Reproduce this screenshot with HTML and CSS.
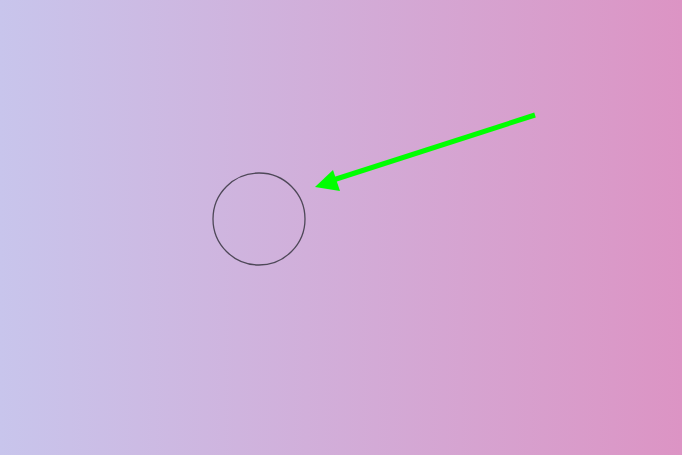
FILE: index.html
```html
<!DOCTYPE html>
<html lang="en">
<head>
    <meta charset="UTF-8">
    <meta name="viewport" content="width=device-width, initial-scale=1.0">
    <title>Canvas</title>
    <link rel="stylesheet" href="styles.css">
</head>
<body>
    <main class="canvas">
        <svg class="drawing" width="682" height="455" viewBox="0 0 682 455">
            <!-- target circle -->
            <circle cx="259" cy="219" r="46" fill="none" stroke="#4e4858" stroke-width="1.3"/>
            <!-- pointer arrow -->
            <line x1="535" y1="115" x2="330" y2="181" stroke="#00ff00" stroke-width="5"/>
            <polygon points="315,187 333,170 340,191" fill="#00ff00"/>
        </svg>
    </main>
</body>
</html>
```

FILE: styles.css
```css
* {
    margin: 0;
    padding: 0;
    box-sizing: border-box;
}

html, body {
    width: 100%;
    height: 100%;
    overflow: hidden;
}

body {
    background: linear-gradient(to right, #c8c5ec 0%, #dc94c4 100%);
}

.canvas {
    position: relative;
    width: 682px;
    height: 455px;
}

.drawing {
    position: absolute;
    top: 0;
    left: 0;
    display: block;
}
```
